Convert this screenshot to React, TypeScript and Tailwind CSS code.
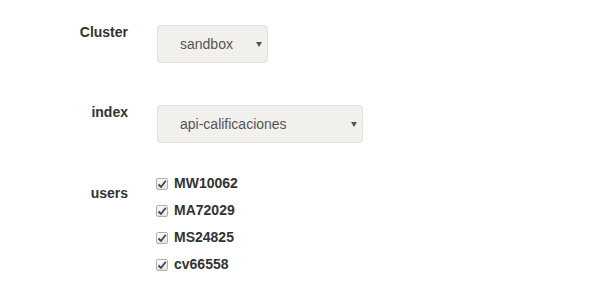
const users = ["MW10062", "MA72029", "MS24825", "cv66558"];

function FakeSelect({ value, width }: { value: string; width: string }) {
  return (
    <div
      className={`${width} mt-[3px] h-[38px] flex items-center justify-between pl-[22px] pr-[1px] bg-[#f1f0ed] border border-[#e4e2de] rounded-[4px] text-[14px] text-[#555]`}
    >
      <span>{value}</span>
      <svg width="14" height="10" viewBox="0 0 14 10" className="block">
        <path d="M4 3h6L7 8z" fill="#555" />
      </svg>
    </div>
  );
}

function Check({ label }: { label: string }) {
  return (
    <div className="flex items-center h-5 gap-[6px]">
      <span className="w-[12px] h-[12px] mt-[1px] flex items-center justify-center rounded-[2px] border border-[#b0b0b0] bg-gradient-to-b from-[#fcfcfc] to-[#e4e4e4]">
        <svg width="10" height="10" viewBox="0 0 10 10">
          <path d="M1.5 5.5 4 8l4.8-6.3" fill="none" stroke="#444" strokeWidth="1.8" />
        </svg>
      </span>
      <span className="font-bold text-[#333]">{label}</span>
    </div>
  );
}

export default function App() {
  return (
    <div
      className="w-[597px] h-[296px] bg-white pt-[22px] text-[14px] leading-5 text-[#333]"
      style={{ fontFamily: '"Liberation Sans", Arial, sans-serif' }}
    >
      <div className="flex items-start">
        <label className="w-[128px] text-right font-bold">Cluster</label>
        <div className="ml-[29px]">
          <FakeSelect value="sandbox" width="w-[111px]" />
        </div>
      </div>

      <div className="flex items-start mt-[39px]">
        <label className="w-[128px] text-right font-bold">index</label>
        <div className="ml-[29px]">
          <FakeSelect value="api-calificaciones" width="w-[206px]" />
        </div>
      </div>

      <div className="flex items-start mt-[30px]">
        <label className="w-[128px] text-right font-bold mt-[10px]">users</label>
        <div className="ml-[28px] flex flex-col gap-[7px]">
          {users.map((u) => (
            <Check key={u} label={u} />
          ))}
        </div>
      </div>
    </div>
  );
}
